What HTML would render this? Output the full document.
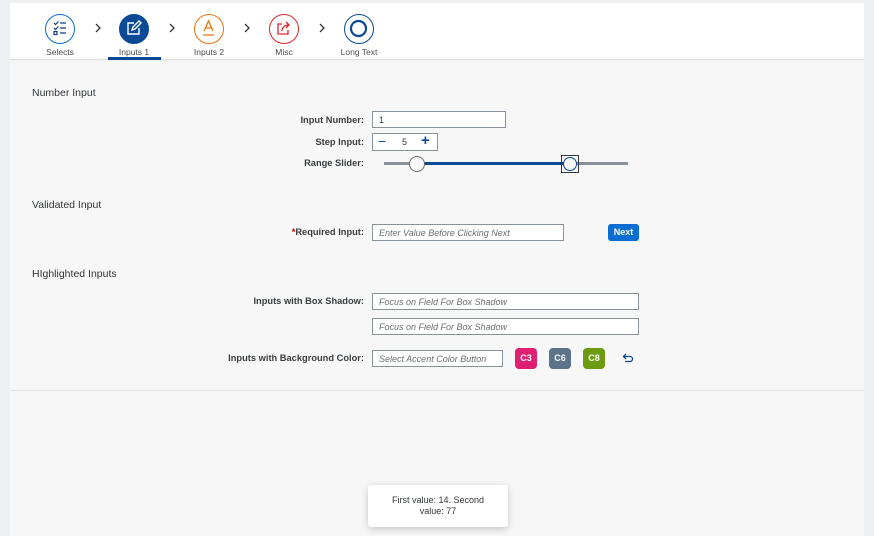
<!DOCTYPE html>
<html><head><style>
*{box-sizing:border-box;margin:0;padding:0}
body{width:874px;height:536px;background:#edeff0;font-family:"Liberation Sans",sans-serif;position:relative;overflow:hidden;color:#32363a}
.hdr{position:absolute;left:10px;top:3px;width:854px;height:57px;background:#fff;border-bottom:1px solid #e0e0e0}
.main{position:absolute;left:10px;top:61px;width:854px;height:475px;background:#f7f7f7}
.ic{position:absolute;top:11px;width:30px;height:30px;border-radius:50%;border:1.5px solid #0a6ed1;background:#fff}
.lbl{position:absolute;top:44px;font-size:8.5px;color:#4a4d50;width:80px;text-align:center}
.chev{position:absolute;top:20px}
.a{position:absolute}
.h{font-size:10.5px;color:#32363a}
.fl{font-size:9.3px;font-weight:bold;color:#3a3d40;text-align:right;width:200px}
.inp{position:absolute;background:#fff;border:1px solid #89919a;height:17px;font-size:9px;padding:3px 6px;font-style:italic;color:#6a6d70}
.btn{position:absolute;width:22px;height:21px;border-radius:4px;color:#fff;font-size:9px;font-weight:bold;text-align:center;line-height:21px}
</style></head><body>
<div class="hdr">
 <div class="ic" style="left:35px"><svg width="27" height="27" viewBox="0 0 27 27" fill="none" stroke="#0a3d7a" stroke-width="1.2"><path d="M8 8l1.5 1.5 3-3M8 13l1.5 1.5 3-3M14 8h6M14 13h6M14 18h6"/><rect x="8" y="16.5" width="3" height="3"/></svg></div>
 <svg class="chev" style="left:84px" width="8" height="10" viewBox="0 0 8 10" fill="none" stroke="#32363a" stroke-width="1.3"><path d="M2 1l4 4-4 4"/></svg>
 <div class="ic" style="left:109px;background:#0a4a95;border-color:#0a4a95"><svg width="27" height="27" viewBox="0 0 27 27" fill="none" stroke="#fff" stroke-width="1.4"><path d="M14 8H8v11h11v-6M12 15l1-3 6-6 2 2-6 6z"/></svg></div>
 <svg class="chev" style="left:158px" width="8" height="10" viewBox="0 0 8 10" fill="none" stroke="#32363a" stroke-width="1.3"><path d="M2 1l4 4-4 4"/></svg>
 <div class="ic" style="left:184px;border-color:#e9730c"><svg width="27" height="27" viewBox="0 0 27 27" fill="none" stroke="#e9730c" stroke-width="1.3"><path d="M9 16l4.5-10 4.5 10M10.5 13h6M8 20h11"/></svg></div>
 <svg class="chev" style="left:233px" width="8" height="10" viewBox="0 0 8 10" fill="none" stroke="#32363a" stroke-width="1.3"><path d="M2 1l4 4-4 4"/></svg>
 <div class="ic" style="left:259px;border-color:#d9272e"><svg width="27" height="27" viewBox="0 0 27 27" fill="none" stroke="#d9272e" stroke-width="1.3"><path d="M12 9H8v10h10v-4M12 16c0-4 3-6 7-6M16 7l3 3-3 3"/></svg></div>
 <svg class="chev" style="left:308px" width="8" height="10" viewBox="0 0 8 10" fill="none" stroke="#32363a" stroke-width="1.3"><path d="M2 1l4 4-4 4"/></svg>
 <div class="ic" style="left:334px;border-color:#0a4a95"><svg width="27" height="27" viewBox="0 0 27 27" fill="none" stroke="#0a4a95" stroke-width="2.2"><circle cx="13.5" cy="13.5" r="7.5"/></svg></div>
 <div class="lbl" style="left:10px">Selects</div>
 <div class="lbl" style="left:84px">Inputs 1</div>
 <div class="lbl" style="left:159px">Inputs 2</div>
 <div class="lbl" style="left:234px">Misc</div>
 <div class="lbl" style="left:309px">Long Text</div>
 <div class="a" style="left:98px;top:54px;width:53px;height:3px;background:#0a4a95"></div>
</div>
<div class="main">
 <div style="position:absolute;left:0;top:329px;width:854px;height:1px;background:#e2e2e2"></div>
</div>
<div class="a h" style="left:32px;top:87px">Number Input</div>
<div class="a fl" style="left:164px;top:115px">Input Number:</div>
<div class="inp" style="left:372px;top:111px;width:134px;font-style:normal;color:#32363a">1</div>
<div class="a fl" style="left:164px;top:137px">Step Input:</div>
<div class="inp" style="left:372px;top:133px;width:66px;height:18px;font-style:normal;color:#32363a;padding:0"><span style="position:absolute;left:5px;top:-1px;font-size:14px;color:#0a4a95">&minus;</span><span style="position:absolute;left:29px;top:3px">5</span><span style="position:absolute;left:48px;top:-2px;font-size:15px;color:#0a4a95;font-weight:bold">+</span></div>
<div class="a fl" style="left:164px;top:158px">Range Slider:</div>
<div class="a" style="left:384px;top:162px;width:244px;height:3px;background:#89919a"></div>
<div class="a" style="left:417px;top:162px;width:153px;height:3px;background:#0a4a95"></div>
<div class="a" style="left:409px;top:156px;width:16px;height:16px;border-radius:50%;border:1.5px solid #6a6d70;background:#f7f7f7"></div>
<div class="a" style="left:561px;top:155px;width:18px;height:18px;border:1px solid #32363a"></div>
<div class="a" style="left:563px;top:157px;width:14px;height:14px;border-radius:50%;border:1.5px solid #0a4a95;background:#f7f7f7"></div>
<div class="a h" style="left:32px;top:199px">Validated Input</div>
<div class="a fl" style="left:164px;top:227px"><span style="color:#bb0000">*</span>Required Input:</div>
<div class="inp" style="left:372px;top:224px;width:192px">Enter Value Before Clicking Next</div>
<div class="a" style="left:608px;top:224px;width:31px;height:17px;background:#0a6ed1;border-radius:3px;color:#fff;font-size:9px;font-weight:bold;text-align:center;line-height:17px">Next</div>
<div class="a h" style="left:32px;top:268px">HIghlighted Inputs</div>
<div class="a fl" style="left:164px;top:296px">Inputs with Box Shadow:</div>
<div class="inp" style="left:372px;top:293px;width:267px">Focus on Field For Box Shadow</div>
<div class="inp" style="left:372px;top:318px;width:267px">Focus on Field For Box Shadow</div>
<div class="a fl" style="left:164px;top:353px">Inputs with Background Color:</div>
<div class="inp" style="left:372px;top:350px;width:131px">Select Accent Color Button</div>
<div class="btn" style="left:515px;top:348px;background:#df1f72">C3</div>
<div class="btn" style="left:549px;top:348px;background:#5b738b">C6</div>
<div class="btn" style="left:583px;top:348px;background:#6c9a10">C8</div>
<svg class="a" style="left:622px;top:352px" width="12" height="12" viewBox="0 0 12 12" fill="none" stroke="#0a4a95" stroke-width="1.3"><path d="M4 2L1.5 4.5 4 7M1.5 4.5H8a2.5 2.5 0 010 5H3"/></svg>
<div class="a" style="left:368px;top:485px;width:140px;height:42px;background:#fff;border-radius:3px;box-shadow:0 2px 8px rgba(0,0,0,.2);font-size:9px;text-align:center;padding-top:10px;line-height:11px;color:#32363a">First value: 14. Second<br>value: 77</div>
</body></html>
